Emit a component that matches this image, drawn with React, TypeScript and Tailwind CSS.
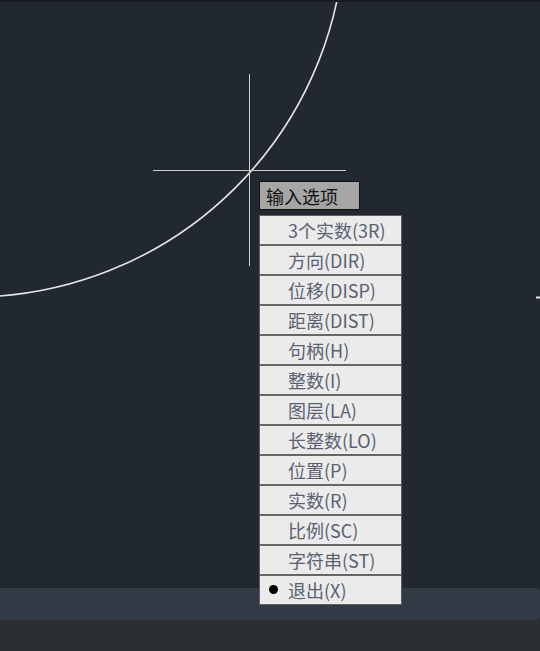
const options = [
  "3个实数(3R)",
  "方向(DIR)",
  "位移(DISP)",
  "距离(DIST)",
  "句柄(H)",
  "整数(I)",
  "图层(LA)",
  "长整数(LO)",
  "位置(P)",
  "实数(R)",
  "比例(SC)",
  "字符串(ST)",
  "退出(X)",
];

const font = { fontFamily: '"Noto Sans CJK SC", "Liberation Sans", sans-serif' };

export default function App() {
  return (
    <main className="w-[540px] h-[651px] flex flex-col bg-[#2a2d31] overflow-hidden" style={font}>
      <div className="relative h-[588px] bg-[#212830] border-t-2 border-[#1a1e24]">
        <svg className="absolute inset-0" width="540" height="586" viewBox="0 2 540 586">
          <circle cx="-28.8" cy="-76.7" r="373.8" fill="none" stroke="#e6e6e6" strokeWidth="1.6" />
          <line x1="249.5" y1="74" x2="249.5" y2="266" stroke="#cfcfcf" strokeWidth="1" />
          <line x1="153" y1="170.5" x2="346" y2="170.5" stroke="#cfcfcf" strokeWidth="1" />
          <line x1="536" y1="297.5" x2="540" y2="297.5" stroke="#e6e6e6" strokeWidth="2" />
        </svg>

        <div className="absolute left-[259px] top-[179px] z-10 flex flex-col">
          <div className="w-[101px] h-[29px] bg-[#a6a6a6] border border-[#111111] flex items-center pl-[6px] text-[18px] text-[#111111] leading-none">
            输入选项
          </div>

          <ul className="mt-[5px] w-[143px] border border-[#5f5f5f] bg-[#666666] flex flex-col gap-[2px]">
            {options.map((opt, i) => (
              <li
                key={opt}
                className="h-[28px] bg-[#ebebeb] flex items-center text-[18px] text-[#5a6272] leading-none relative"
              >
                {i === options.length - 1 && (
                  <span className="absolute left-[9px] top-[9px] w-[9px] h-[9px] rounded-full bg-black" />
                )}
                <span className="pl-[28px]">{opt}</span>
              </li>
            ))}
          </ul>
        </div>
      </div>

      <div className="h-[32px] bg-[#323a45] rounded-r-sm" />
      <div className="flex-1 bg-[#2a2d31]" />
    </main>
  );
}
